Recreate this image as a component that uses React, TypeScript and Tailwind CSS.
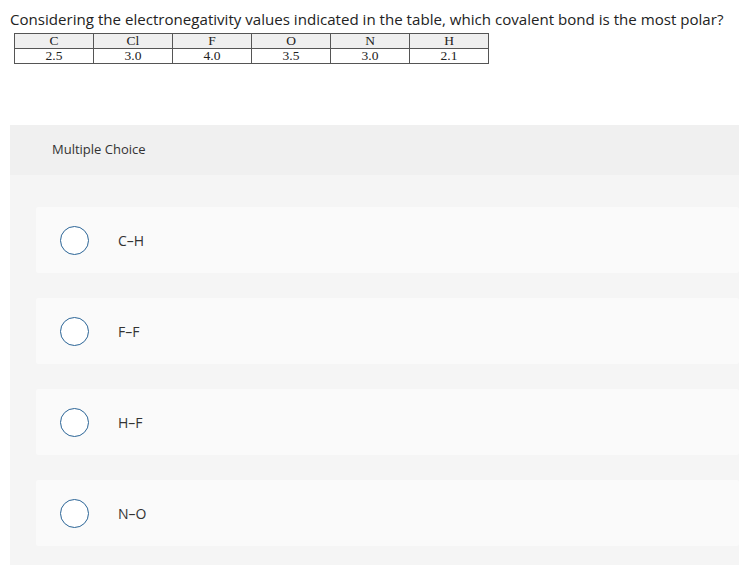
import React from "react";

const cols = [
  ["C", "2.5"],
  ["Cl", "3.0"],
  ["F", "4.0"],
  ["O", "3.5"],
  ["N", "3.0"],
  ["H", "2.1"],
];

const options = ["C\u2013H", "F\u2013F", "H\u2013F", "N\u2013O"];

export default function App() {
  return (
    <div className="w-[739px] h-[565px] bg-white overflow-hidden" style={{ fontFamily: '"Open Sans", "Liberation Sans", sans-serif' }}>
      <div className="pl-[10px] pt-[9px] h-[33px] text-[15.1px] leading-[20px] text-[#222] whitespace-nowrap">
        Considering the electronegativity values indicated in the table, which covalent bond is the most polar?
      </div>
      <div className="pl-[14px]">
        <table
          className="border-collapse border border-[#555] text-[13.5px] leading-[14px] text-[#222]"
          style={{ fontFamily: '"Liberation Serif", serif' }}
        >
          <tbody>
            <tr className="bg-[#efefef]">
              {cols.map(([h]) => (
                <td key={h} className="w-[79px] h-[15px] border border-[#555] text-center p-0 align-middle">
                  {h}
                </td>
              ))}
            </tr>
            <tr>
              {cols.map(([h, v]) => (
                <td key={h} className="w-[79px] h-[15px] border border-[#555] text-center p-0 align-middle">
                  {v}
                </td>
              ))}
            </tr>
          </tbody>
        </table>
      </div>
      <div className="mt-[61px] ml-[10px] bg-[#f5f5f5] h-[440px]">
        <div className="h-[50px] bg-[#f0f0f0] flex items-center pl-[42px] text-[13px] text-[#333]">
          Multiple Choice
        </div>
        <div className="pt-[32px] pl-[26px] flex flex-col gap-[25px]">
          {options.map((o) => (
            <div key={o} className="h-[66px] bg-[#fafafa] rounded-[2px] flex items-center pl-[24px]">
              <div className="w-[29px] h-[29px] rounded-full border-[1.5px] border-[#2a6496] bg-white shrink-0" />
              <div className="ml-[29px] text-[14px] text-[#333]">{o}</div>
            </div>
          ))}
        </div>
      </div>
    </div>
  );
}
